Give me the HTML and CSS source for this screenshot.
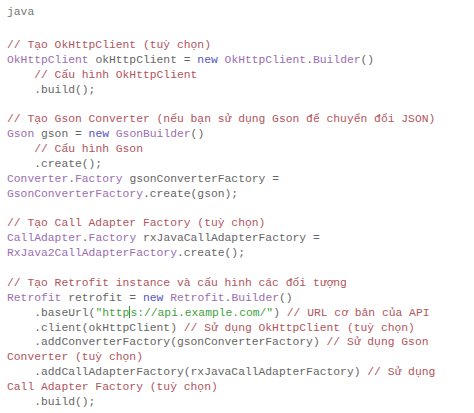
FILE: index.html
```html
<!DOCTYPE html>
<html>
<head>
<meta charset="utf-8">
<link rel="stylesheet" href="styles.css">
</head>
<body>
<div class="lang">java</div>
<pre class="code"><span class="c">// Tạo OkHttpClient (tuỳ chọn)</span>
<span class="t">OkHttpClient</span> okHttpClient = <span class="k">new</span> <span class="t">OkHttpClient</span>.<span class="t">Builder</span>()
    <span class="c">// Cấu hình OkHttpClient</span>
    .build();

<span class="c">// Tạo Gson Converter (nếu bạn sử dụng Gson để chuyển đổi JSON)</span>
<span class="t">Gson</span> gson = <span class="k">new</span> <span class="t">GsonBuilder</span>()
    <span class="c">// Cấu hình Gson</span>
    .create();
<span class="t">Converter</span>.<span class="t">Factory</span> gsonConverterFactory =
<span class="t">GsonConverterFactory</span>.create(gson);

<span class="c">// Tạo Call Adapter Factory (tuỳ chọn)</span>
<span class="t">CallAdapter</span>.<span class="t">Factory</span> rxJavaCallAdapterFactory =
<span class="t">RxJava2CallAdapterFactory</span>.create();

<span class="c">// Tạo Retrofit instance và cấu hình các đối tượng</span>
<span class="t">Retrofit</span> retrofit = <span class="k">new</span> <span class="t">Retrofit</span>.<span class="t">Builder</span>()
    .baseUrl(<span class="s">"http<span class="caret"></span>s://api.example.com/"</span>) <span class="c">// URL cơ bản của API</span>
    .client(okHttpClient) <span class="c">// Sử dụng OkHttpClient (tuỳ chọn)</span>
    .addConverterFactory(gsonConverterFactory) <span class="c">// Sử dụng Gson</span>
<span class="c">Converter (tuỳ chọn)</span>
    .addCallAdapterFactory(rxJavaCallAdapterFactory) <span class="c">// Sử dụng</span>
<span class="c">Call Adapter Factory (tuỳ chọn)</span>
    .build();</pre>
</body>
</html>
```
FILE: styles.css
```css
html, body {
  margin: 0;
  padding: 0;
  background: #ffffff;
}
body {
  padding: 5px 0 0 7px;
  font-family: "Liberation Mono", "DejaVu Sans Mono", monospace;
  font-size: 11.33px;
  line-height: 14.88px;
  color: #666666;
}
.lang {
  color: #777777;
}
.code {
  margin: 18px 0 0 0;
  font-family: inherit;
  font-size: inherit;
  line-height: inherit;
  white-space: pre;
}
.c { color: #b0555c; }
.t { color: #9a6eb0; }
.k { color: #5555c0; }
.s { color: #3f9f3f; }
.caret {
  display: inline-block;
  width: 0;
  height: 12px;
  border-left: 1.5px solid #2a9a2a;
  vertical-align: -2px;
}
```
